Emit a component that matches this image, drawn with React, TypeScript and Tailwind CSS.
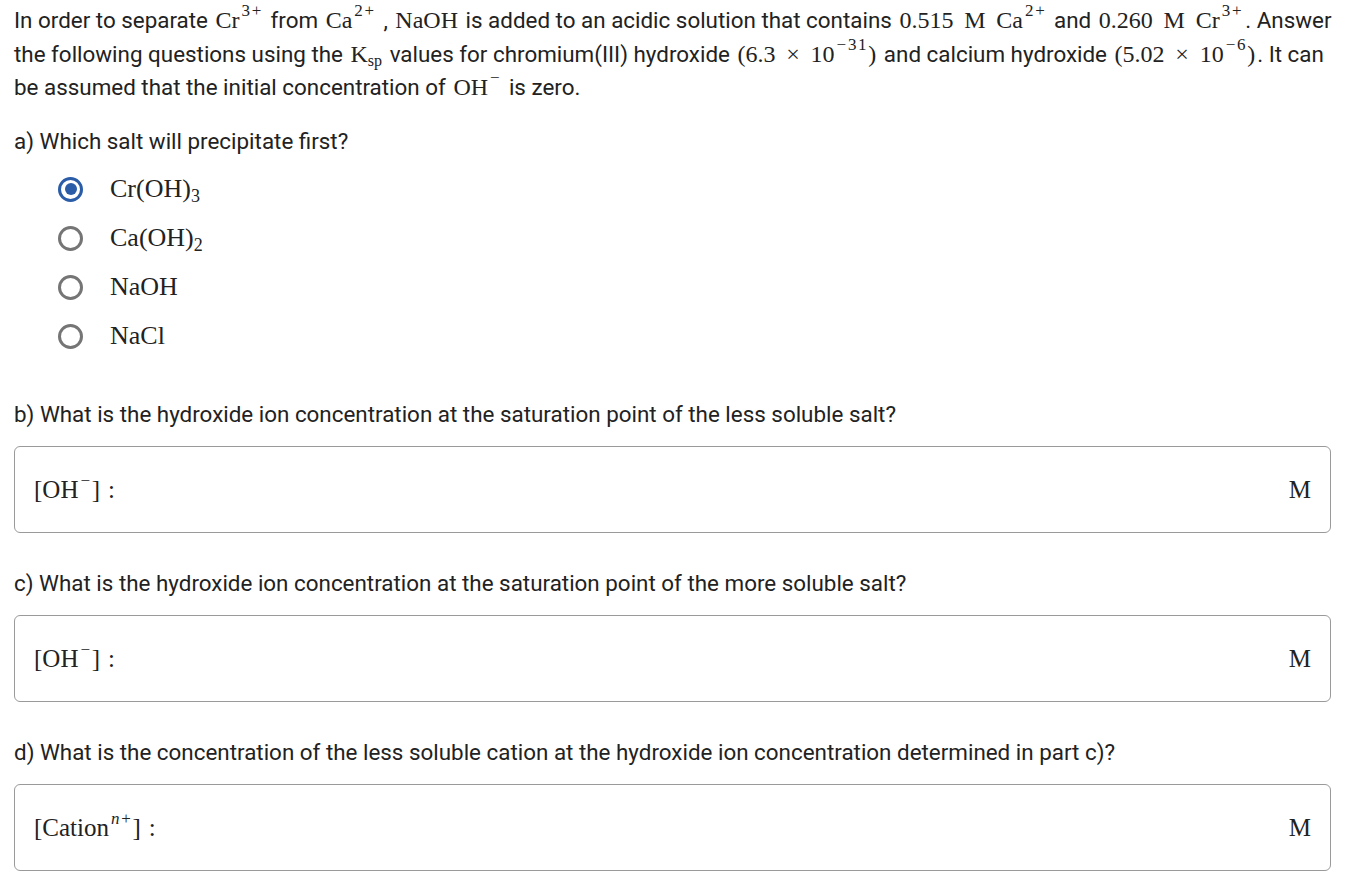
import React from 'react';

const M = ({ children }: { children: React.ReactNode }) => (
  <span className="font-['Liberation_Serif',serif] text-[24px] [word-spacing:0.2em] px-[2px]">{children}</span>
);

const Sup = ({ children }: { children: React.ReactNode }) => (
  <sup className="text-[17px] top-[-0.7em] ml-[2px] tracking-[0.1em]">{children}</sup>
);

const options = [
  { id: 'cr', label: <>Cr(OH)<sub className="text-[18px] top-[0.25em]">3</sub></> },
  { id: 'ca', label: <>Ca(OH)<sub className="text-[18px] top-[0.25em]">2</sub></> },
  { id: 'naoh', label: <>NaOH</> },
  { id: 'nacl', label: <>NaCl</> },
];

const AnswerBox = ({ label }: { label: React.ReactNode }) => (
  <div className="ml-[14px] mr-[27px] h-[87px] rounded-[6px] border border-[#9a9a9a] flex items-center justify-between pl-[19px] pr-[19px] font-['Liberation_Serif',serif] text-[25px] text-[#222]">
    <div className="flex items-center">
      {label}
      <span className="ml-[8px]">:</span>
    </div>
    <span>M</span>
  </div>
);

const App = () => {
  const [selected, setSelected] = React.useState('cr');

  return (
    <div className="bg-white w-[1358px] min-h-[888px] font-['Roboto',sans-serif] text-[22.4px] text-[#222] pt-[4px]">
      <p className="px-[14px] leading-[33.5px] whitespace-nowrap">
        In order to separate <M>Cr<Sup>3+</Sup></M> from <M>Ca<Sup>2+</Sup></M> , <M>NaOH</M> is added to an
        acidic solution that contains <M>0.515 M Ca<Sup>2+</Sup></M> and <M>0.260 M Cr<Sup>3+</Sup></M>. Answer
        <br />
        the following questions using the{' '}
        <M>
          K<sub className="text-[16px] top-[0.3em]">sp</sub>
        </M>{' '}
        values for chromium(III) hydroxide <M>(6.3 × 10<Sup>−31</Sup>)</M> and calcium hydroxide{' '}
        <M>(5.02 × 10<Sup>−6</Sup>)</M>. It can
        <br />
        be assumed that the initial concentration of <M>OH<Sup>−</Sup></M> is zero.
      </p>

      <p className="px-[14px] mt-[19.5px] leading-[34px]">a) Which salt will precipitate first?</p>

      <ul className="mt-[10px] flex flex-col gap-[7px]">
        {options.map(item => {
          const active = selected === item.id;
          return (
            <li
              key={item.id}
              onClick={() => setSelected(item.id)}
              className="flex items-center h-[42px] pl-[58px] cursor-pointer"
            >
              {active ? (
                <span className="w-[25px] h-[25px] rounded-full border-[3px] border-[#2a5ca8] flex items-center justify-center">
                  <span className="w-[12px] h-[12px] rounded-full bg-[#2a5ca8]" />
                </span>
              ) : (
                <span className="w-[25px] h-[25px] rounded-full border-[3px] border-[#757575]" />
              )}
              <span className="ml-[27px] font-['Liberation_Serif',serif] text-[26px] leading-none">
                {item.label}
              </span>
            </li>
          );
        })}
      </ul>

      <p className="px-[14px] mt-[40px] leading-[34px]">
        b) What is the hydroxide ion concentration at the saturation point of the less soluble salt?
      </p>
      <div className="mt-[15px]">
        <AnswerBox
          label={
            <span>
              [OH<Sup>−</Sup>]
            </span>
          }
        />
      </div>

      <p className="px-[14px] mt-[33px] leading-[34px]">
        c) What is the hydroxide ion concentration at the saturation point of the more soluble salt?
      </p>
      <div className="mt-[15px]">
        <AnswerBox
          label={
            <span>
              [OH<Sup>−</Sup>]
            </span>
          }
        />
      </div>

      <p className="px-[14px] mt-[33px] leading-[34px]">
        d) What is the concentration of the less soluble cation at the hydroxide ion concentration determined in
        part c)?
      </p>
      <div className="mt-[15px]">
        <AnswerBox
          label={
            <span>
              [Cation<Sup><i>n</i>+</Sup>]
            </span>
          }
        />
      </div>
    </div>
  );
};

export default App;
